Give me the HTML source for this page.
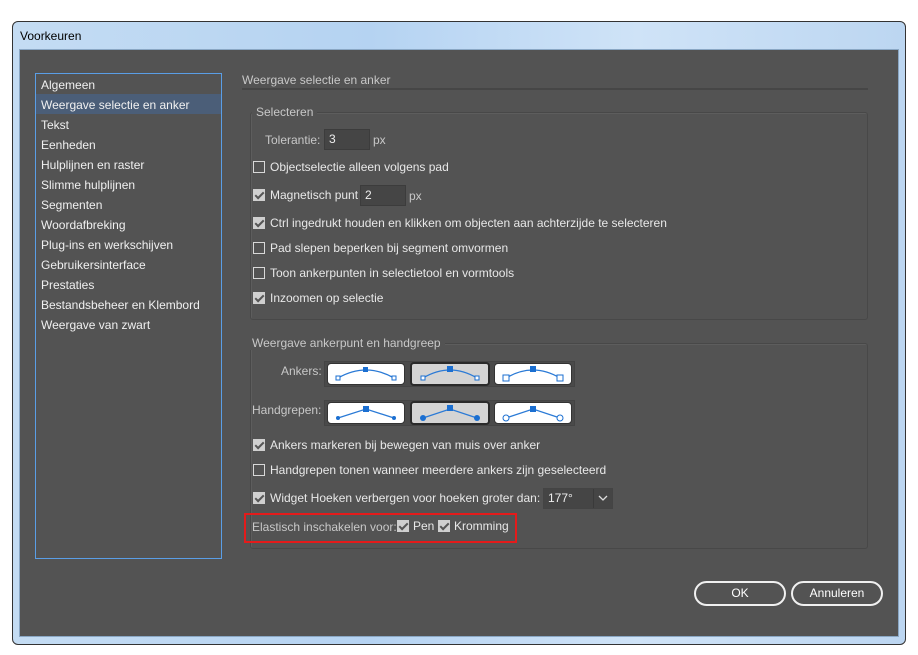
<!DOCTYPE html>
<html><head><style>
*{margin:0;padding:0;box-sizing:border-box}
body{width:918px;height:655px;background:#fff;position:relative;font-family:"Liberation Sans",Tahoma,sans-serif;font-size:12px;overflow:hidden}
.a{position:absolute}
.win{left:12px;top:21px;width:894px;height:624px;border:1px solid #333;border-radius:6px;background:linear-gradient(90deg,#c4dcf3,#b5d3f2 40%,#cfe3f7 70%,#bcd6f1);}
.title{left:20px;top:29px;font-size:12px;color:#000}
.content{left:19px;top:49px;width:880px;height:588px;background:#535353;border:1px solid #8aa7c4}
.t{position:absolute;color:#e8e8e8;white-space:nowrap}
.dim{color:#c8c8c8}
.list{left:35px;top:73px;width:187px;height:486px;border:1px solid #5a9ee6}
.sel{left:36px;top:94px;width:185px;height:20px;background:#4b5e78}
.grp{border:1px solid #484848;border-radius:3px;box-shadow:inset 1px 1px 0 #5d5d5d}
.leg{background:#535353;padding:0 4px;color:#c8c8c8}
.cb{position:absolute;width:12px;height:12px;border:1px solid #d8d8d8;background:#535353}
.cb.on{background:#cfcfcf;border-color:#cfcfcf}
.cb.on::after{content:"";position:absolute;left:3px;top:0px;width:3px;height:7px;border:solid #555;border-width:0 2px 2px 0;transform:rotate(45deg)}
.inp{position:absolute;background:#454545;border:1px solid #3c3c3c;color:#eee;padding-left:4px;height:21px;line-height:19px}
.btn{position:absolute;width:78px;height:22px;background:#fff;border:1px solid #333;border-radius:4px}
.btn.s{background:#d4d4d4;border:2px solid #2a2a2a}
.pb{position:absolute;height:26px;border:1px solid #444;background:#4a4a4a}
.ok{position:absolute;height:25px;border:2px solid #f0f0f0;border-radius:13px;color:#fff;text-align:center;line-height:21px}
</style></head><body>
<div class="a win"></div>
<div class="a title">Voorkeuren</div>
<div class="a content"></div>
<div class="a sel"></div>
<div class="a" style="left:41px;top:75px;color:#f0f0f0;line-height:20px">
Algemeen<br>Weergave selectie en anker<br>Tekst<br>Eenheden<br>Hulplijnen en raster<br>Slimme hulplijnen<br>Segmenten<br>Woordafbreking<br>Plug-ins en werkschijven<br>Gebruikersinterface<br>Prestaties<br>Bestandsbeheer en Klembord<br>Weergave van zwart</div>
<div class="list a"></div>

<div class="t dim" style="left:242px;top:73px">Weergave selectie en anker</div>
<div class="a" style="left:242px;top:88px;width:626px;height:2px;background:#464646"></div>

<div class="a grp" style="left:250px;top:112px;width:618px;height:208px"></div>
<div class="t leg" style="left:252px;top:105px">Selecteren</div>
<div class="t dim" style="left:265px;top:133px">Tolerantie:</div>
<div class="inp" style="left:324px;top:129px;width:46px">3</div>
<div class="t dim" style="left:373px;top:133px">px</div>
<div class="cb" style="left:253px;top:161px"></div><div class="t" style="left:270px;top:160px">Objectselectie alleen volgens pad</div>
<div class="cb on" style="left:253px;top:189px"></div><div class="t" style="left:270px;top:188px">Magnetisch punt</div>
<div class="inp" style="left:360px;top:185px;width:46px">2</div>
<div class="t dim" style="left:409px;top:189px">px</div>
<div class="cb on" style="left:253px;top:217px"></div><div class="t" style="left:270px;top:216px">Ctrl ingedrukt houden en klikken om objecten aan achterzijde te selecteren</div>
<div class="cb" style="left:253px;top:242px"></div><div class="t" style="left:270px;top:241px">Pad slepen beperken bij segment omvormen</div>
<div class="cb" style="left:253px;top:267px"></div><div class="t" style="left:270px;top:266px">Toon ankerpunten in selectietool en vormtools</div>
<div class="cb on" style="left:253px;top:292px"></div><div class="t" style="left:270px;top:291px">Inzoomen op selectie</div>

<div class="a grp" style="left:250px;top:343px;width:618px;height:206px"></div>
<div class="t leg" style="left:248px;top:336px">Weergave ankerpunt en handgreep</div>
<div class="t dim" style="left:281px;top:364px">Ankers:</div>
<div class="pb" style="left:324px;top:361px;width:251px"></div>
<div class="btn" style="left:327px;top:363px"><svg width="76" height="20"><path d="M10 14 Q38 -2 66 14" stroke="#2a7ad6" fill="none" stroke-width="1.3"/><rect x="35" y="3" width="5" height="5" fill="#1b6fd1"/><rect x="8" y="12" width="4" height="4" fill="#fff" stroke="#1b6fd1"/><rect x="64" y="12" width="4" height="4" fill="#fff" stroke="#1b6fd1"/></svg></div>
<div class="btn s" style="left:410px;top:362px;width:80px;height:24px"><svg width="76" height="20"><path d="M11 14 Q38 -2 65 14" stroke="#2a7ad6" fill="none" stroke-width="1.3"/><rect x="35" y="2" width="6" height="6" fill="#1b6fd1"/><rect x="9" y="12" width="4" height="4" fill="#fff" stroke="#1b6fd1"/><rect x="63" y="12" width="4" height="4" fill="#fff" stroke="#1b6fd1"/></svg></div>
<div class="btn" style="left:494px;top:363px"><svg width="76" height="20"><path d="M11 14 Q38 -2 65 14" stroke="#2a7ad6" fill="none" stroke-width="1.3"/><rect x="35" y="2" width="6" height="6" fill="#1b6fd1"/><rect x="8" y="11" width="6" height="6" fill="#fff" stroke="#1b6fd1"/><rect x="62" y="11" width="6" height="6" fill="#fff" stroke="#1b6fd1"/></svg></div>
<div class="t dim" style="left:252px;top:403px">Handgrepen:</div>
<div class="pb" style="left:324px;top:400px;width:251px"></div>
<div class="btn" style="left:327px;top:402px"><svg width="76" height="20"><path d="M10 15 L38 6 L66 15" stroke="#2a7ad6" fill="none" stroke-width="1.3"/><rect x="35" y="3" width="6" height="6" fill="#1b6fd1"/><circle cx="10" cy="15" r="2" fill="#1b6fd1"/><circle cx="66" cy="15" r="2" fill="#1b6fd1"/></svg></div>
<div class="btn s" style="left:410px;top:401px;width:80px;height:24px"><svg width="76" height="20"><path d="M11 15 L38 6 L65 15" stroke="#2a7ad6" fill="none" stroke-width="1.3"/><rect x="35" y="2" width="6" height="6" fill="#1b6fd1"/><circle cx="11" cy="15" r="3" fill="#1b6fd1"/><circle cx="65" cy="15" r="3" fill="#1b6fd1"/></svg></div>
<div class="btn" style="left:494px;top:402px"><svg width="76" height="20"><path d="M11 15 L38 6 L65 15" stroke="#2a7ad6" fill="none" stroke-width="1.3"/><rect x="35" y="3" width="6" height="6" fill="#1b6fd1"/><circle cx="11" cy="15" r="3" fill="#fff" stroke="#1b6fd1"/><circle cx="65" cy="15" r="3" fill="#fff" stroke="#1b6fd1"/></svg></div>
<div class="cb on" style="left:253px;top:439px"></div><div class="t" style="left:270px;top:438px">Ankers markeren bij bewegen van muis over anker</div>
<div class="cb" style="left:253px;top:464px"></div><div class="t" style="left:270px;top:463px">Handgrepen tonen wanneer meerdere ankers zijn geselecteerd</div>
<div class="cb on" style="left:253px;top:492px"></div><div class="t" style="left:270px;top:491px">Widget Hoeken verbergen voor hoeken groter dan:</div>
<div class="inp" style="left:543px;top:488px;width:70px;border-color:#444">177°</div>
<div class="a" style="left:593px;top:489px;width:1px;height:19px;background:#3a3a3a"></div>
<svg class="a" style="left:598px;top:494px" width="10" height="8"><path d="M1 2 L5 6 L9 2" stroke="#ddd" fill="none" stroke-width="1.3"/></svg>
<div class="a" style="left:244px;top:513px;width:273px;height:30px;border:2px solid #e41b1b"></div>
<div class="t dim" style="left:252px;top:520px">Elastisch inschakelen voor:</div>
<div class="cb on" style="left:397px;top:520px"></div><div class="t" style="left:413px;top:519px">Pen</div>
<div class="cb on" style="left:438px;top:520px"></div><div class="t" style="left:454px;top:519px">Kromming</div>

<div class="ok" style="left:694px;top:581px;width:92px">OK</div>
<div class="ok" style="left:791px;top:581px;width:92px">Annuleren</div>
</body></html>
